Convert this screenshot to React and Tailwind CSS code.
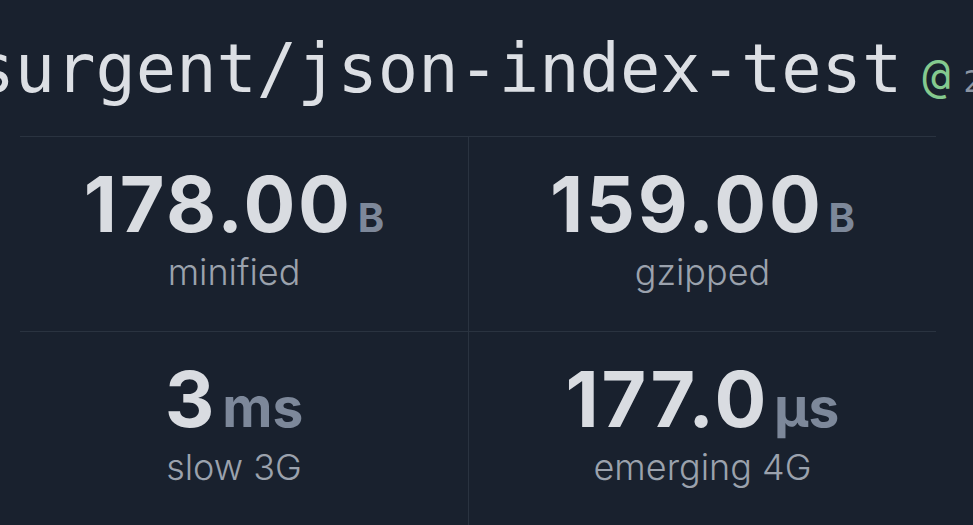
import React from 'react';

const stats = [
  [
    { value: '178.00', unit: 'B', small: true, label: 'minified' },
    { value: '159.00', unit: 'B', small: true, label: 'gzipped' },
  ],
  [
    { value: '3', unit: 'ms', label: 'slow 3G' },
    { value: '177.0', unit: 'µs', label: 'emerging 4G' },
  ],
];

function Stat({ stat, divider, tall }) {
  return (
    <div
      className={`flex flex-col items-center pt-[29px] ${tall ? 'h-[194px]' : 'h-[200px]'} ${
        divider ? 'border-l border-[#2a3340]' : ''
      }`}
    >
      <div className="flex items-baseline leading-none">
        <span className="text-[77px] font-bold tracking-[0.035em] text-[#d9dce1]">{stat.value}</span>
        <span
          className={`ml-[5px] font-bold text-[#7d889a] ${stat.small ? 'text-[40px]' : 'text-[55px]'}`}
        >
          {stat.unit}
        </span>
      </div>
      <div className="mt-[11px] text-[36px] font-light leading-none text-[#9ba2ad]">{stat.label}</div>
    </div>
  );
}

export default function App() {
  return (
    <div className="h-screen overflow-hidden bg-[#19212e] font-['Inter',sans-serif]">
      <h1 className="flex items-baseline justify-center whitespace-nowrap pl-[15px] pt-[36px] pb-[33px] font-['DejaVu_Sans_Mono',monospace] text-[67px] font-normal leading-none text-[#dcdfe4]">
        <span>@surgent/json-index-test</span>
        <span className="ml-[20px] mr-[13px] text-[47px] text-[#84c98f]">@</span>
        <span className="text-[30px] text-[#8c95a3]">2.0.0</span>
      </h1>

      <div className="w-[936px]">
        <div className="ml-5 h-px bg-[#2a3340]" />
        <div className="grid grid-cols-2">
          <Stat stat={stats[0][0]} tall />
          <Stat stat={stats[0][1]} divider tall />
        </div>
        <div className="ml-5 h-px bg-[#2a3340]" />
        <div className="grid grid-cols-2">
          <Stat stat={stats[1][0]} />
          <Stat stat={stats[1][1]} divider />
        </div>
      </div>
    </div>
  );
}
